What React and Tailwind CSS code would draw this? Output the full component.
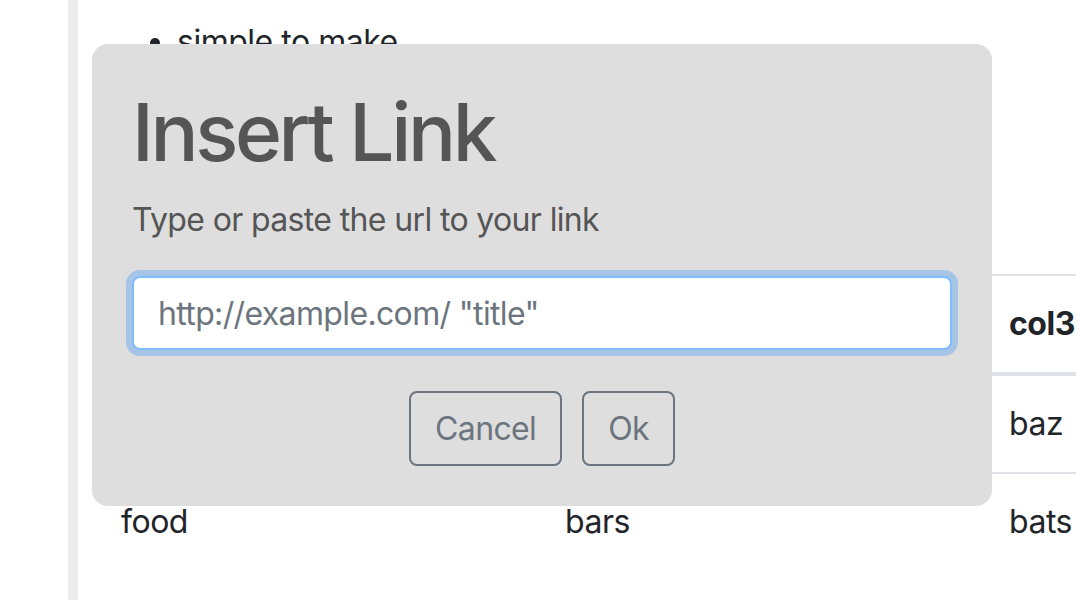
export default function App() {
  const cell = "px-[24px] py-[24px] leading-[48px]";
  return (
    <div className="relative w-[1076px] h-[600px] overflow-hidden bg-white font-['Inter',sans-serif] text-[32px] text-[#212529] tracking-[-0.015em]">
      <div className="flex h-full">
        <div className="w-[68px] shrink-0" />
        <div className="w-[10px] shrink-0 bg-[#ececec]" />
        <div className="pl-[19px] pt-[18px] shrink-0">
          <ul className="list-disc pl-[80px] leading-[48px]">
            <li>simple to make</li>
            <li>easy to read</li>
          </ul>
          <div className="mt-[160px] w-[1332px] border-t-2 border-[#dee2e6]">
            <div className="grid grid-cols-[444px_444px_444px] border-b-4 border-[#dee2e6] font-bold">
              <div className={cell}>col1</div>
              <div className={cell}>col2</div>
              <div className={cell}>col3</div>
            </div>
            <div className="grid grid-cols-[444px_444px_444px] border-b-2 border-[#dee2e6]">
              <div className={cell}>foo</div>
              <div className={cell}>bar</div>
              <div className={cell}>baz</div>
            </div>
            <div className="grid grid-cols-[444px_444px_444px]">
              <div className={cell}>food</div>
              <div className={cell}>bars</div>
              <div className={cell}>bats</div>
            </div>
          </div>
        </div>
      </div>

      <div className="absolute left-[92px] top-[44px] w-[900px] rounded-[16px] bg-[#dedede] p-[40px] text-[#555555]">
        <h1 className="text-[80px] leading-[96px] font-medium tracking-[-0.042em] mb-[16px]">Insert Link</h1>
        <p className="leading-[48px] tracking-[-0.02em] mb-[32px]">Type or paste the url to your link</p>
        <input
          type="text"
          placeholder={'http://example.com/ "title"'}
          className="block w-full h-[74px] rounded-[8px] border-2 border-[#80bdff] bg-white px-[24px] text-[32px] tracking-[-0.02em] text-[#495057] placeholder:text-[#6c757d] outline-none shadow-[0_0_0_6px_rgba(0,123,255,0.25)]"
        />
        <div className="mt-[41px] flex justify-center gap-[20px]">
          <button className="h-[75px] rounded-[8px] border-2 border-[#6c757d] px-[24px] text-[32px] leading-[48px] tracking-[-0.02em] text-[#6c757d]">Cancel</button>
          <button className="h-[75px] rounded-[8px] border-2 border-[#6c757d] px-[24px] text-[32px] leading-[48px] tracking-[-0.02em] text-[#6c757d]">Ok</button>
        </div>
      </div>
    </div>
  );
}
